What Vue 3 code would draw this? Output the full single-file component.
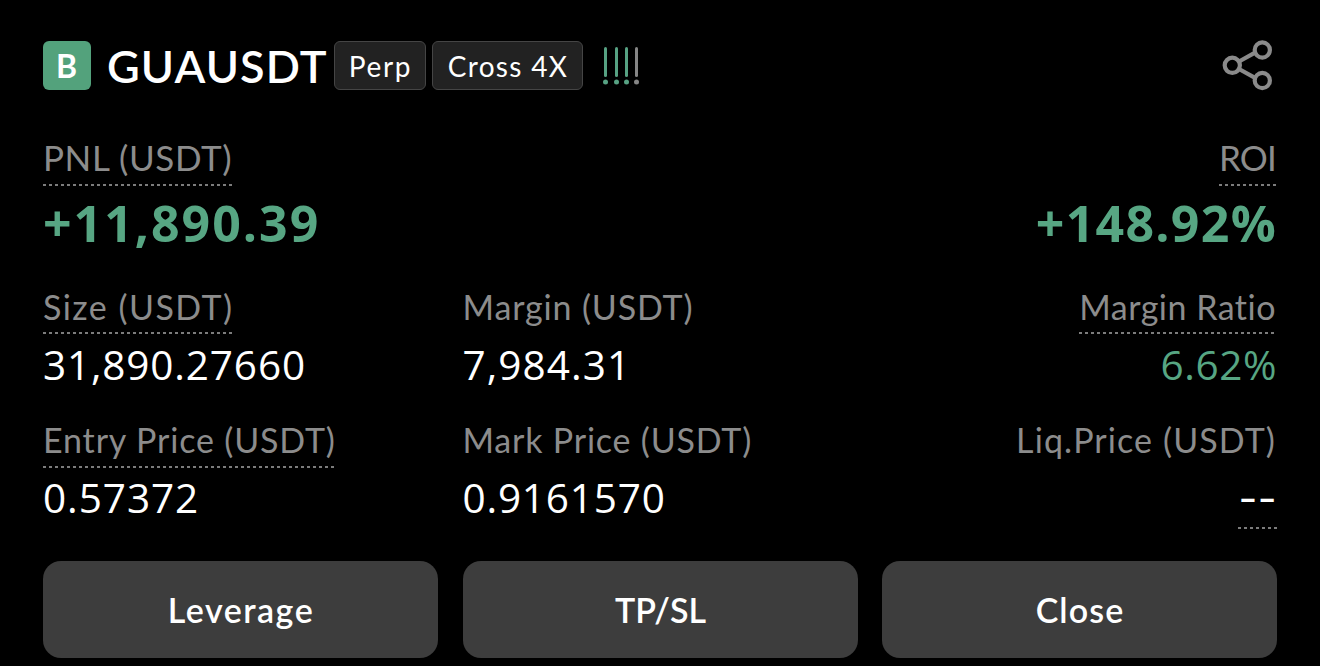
<template>
  <div class="position-card">
    <!-- header -->
    <div class="header">
      <span class="side-badge">B</span>
      <span class="symbol">GUAUSDT</span>
      <span class="tag perp">Perp</span>
      <span class="tag cross">Cross 4X</span>
      <svg class="adl" width="38" height="40" viewBox="0 0 38 40">
        <g v-for="bar in adlBars" :key="bar.x" :stroke="bar.color" :fill="bar.color">
          <line :x1="bar.x" y1="2.5" :x2="bar.x" y2="29.5" stroke-width="3" stroke-linecap="round" />
          <circle :cx="bar.x" cy="36" r="2.5" stroke="none" />
        </g>
      </svg>
      <svg class="share" width="54" height="54" viewBox="0 0 54 54" @click="onShare">
        <g fill="none" stroke="#8a8a8a" stroke-width="4.2">
          <path d="M19 22.5 L35.5 13.3 M19 30 L35.5 39.2" />
          <circle cx="12.3" cy="26.3" r="7.6" />
          <circle cx="42.3" cy="11" r="7.6" />
          <circle cx="42.3" cy="41.5" r="7.6" />
        </g>
      </svg>
    </div>

    <!-- stats -->
    <div v-for="(row, i) in rows" :key="i" class="stats" :class="'row-' + i">
      <div v-for="item in row" :key="item.key" class="stat" :class="item.key">
        <div class="label-line">
          <span class="label" :class="{ dotted: item.dotted }">{{ item.label }}</span>
        </div>
        <div class="value-line">
          <span class="value" :class="{ green: item.green, dotted: item.dottedValue }">{{ item.value }}</span>
        </div>
      </div>
    </div>

    <!-- actions -->
    <div class="actions">
      <button class="action leverage">Leverage</button>
      <button class="action tpsl">TP/SL</button>
      <button class="action close">Close</button>
    </div>
  </div>
</template>

<script setup>
import { ref } from 'vue'

const adlBars = [
  { x: 3.5, color: '#57a283' },
  { x: 14.5, color: '#57a283' },
  { x: 24.5, color: '#57a283' },
  { x: 34.5, color: '#858585' }
]

const rows = ref([
  [
    { key: 'pnl', label: 'PNL (USDT)', value: '+11,890.39', dotted: true, green: true },
    { key: 'roi', label: 'ROI', value: '+148.92%', dotted: true, green: true }
  ],
  [
    { key: 'size', label: 'Size (USDT)', value: '31,890.27660', dotted: true },
    { key: 'margin', label: 'Margin (USDT)', value: '7,984.31' },
    { key: 'ratio', label: 'Margin Ratio', value: '6.62%', dotted: true, green: true }
  ],
  [
    { key: 'entry', label: 'Entry Price (USDT)', value: '0.57372', dotted: true },
    { key: 'mark', label: 'Mark Price (USDT)', value: '0.9161570' },
    { key: 'liq', label: 'Liq.Price (USDT)', value: '--', dottedValue: true }
  ]
])

const onShare = () => {
  console.log('share')
}
</script>

<style>
body {
  background: #000;
}
</style>

<style scoped>
.position-card {
  box-sizing: border-box;
  height: 666px;
  padding: 41px 43px 0;
  overflow: hidden;
  background: #000;
  color: #fff;
  font-family: Lato, "Open Sans", sans-serif;
  font-variant-ligatures: none;
  font-kerning: normal;
}

.header {
  display: flex;
  align-items: center;
  height: 49px;
}

.side-badge {
  box-sizing: border-box;
  width: 48px;
  height: 49px;
  padding-right: 1px;
  border-radius: 6px;
  background: #53a27c;
  font-size: 32px;
  font-weight: 700;
  line-height: 49px;
  text-align: center;
}

.symbol {
  width: 227px;
  margin-left: 16px;
  font-size: 45px;
  font-weight: 600;
  line-height: 50px;
  letter-spacing: 1.1px;
}

.tag {
  box-sizing: border-box;
  height: 49px;
  border: 1.5px solid #454545;
  border-radius: 6px;
  background: #222;
  font-size: 28px;
  line-height: 48px;
  text-align: center;
  white-space: nowrap;
}

.perp {
  width: 92px;
  padding-left: 1px;
  letter-spacing: 1.7px;
}

.cross {
  width: 151px;
  margin-left: 6px;
  padding-left: 1px;
  letter-spacing: 1.3px;
}

.adl {
  margin-left: 19px;
}

.share {
  margin-left: auto;
  margin-right: 3px;
  cursor: pointer;
}

.stats {
  display: grid;
  grid-template-columns: repeat(3, 395px);
  justify-content: space-between;
}

.row-0 {
  grid-template-columns: auto auto;
  margin-top: 46px;
}

.row-1 {
  margin-top: 26px;
}

.row-2 {
  margin-top: 24px;
}

.stat:last-child {
  text-align: right;
}

.label-line {
  display: flex;
  height: 49px;
}

.row-0 .label-line,
.row-2 .label-line {
  height: 50px;
}

.stat:last-child .label-line,
.stat:last-child .value-line {
  justify-content: flex-end;
}

.label {
  color: #8c8c8c;
  font-size: 34px;
  line-height: 43px;
  white-space: nowrap;
}

.dotted {
  background: repeating-linear-gradient(to right, #7c7c7c 0 3px, transparent 3px 6px) left bottom / 100% 2px no-repeat;
}

.value-line {
  display: flex;
  height: 60px;
}

.value {
  font-family: "Open Sans", "Noto Sans", sans-serif;
  font-size: 40.5px;
  line-height: 62px;
}

.row-0 .label {
  font-size: 35px;
}

.row-0 .value-line {
  height: 73px;
}

.row-0 .value {
  font-size: 50px;
  font-weight: 700;
  line-height: 75px;
}

.row-2 .value-line {
  height: 61px;
}

.row-2 .value {
  line-height: 60px;
}

.green {
  color: #57a683;
}

/* tracking per cell */
.pnl .label { letter-spacing: 0.6px; }
.pnl .value { letter-spacing: 2px; }
.roi .label { letter-spacing: -0.8px; }
.roi .value { letter-spacing: 1.3px; }
.size .label { letter-spacing: 1.45px; }
.size .value { letter-spacing: 0.85px; }
.margin .label { letter-spacing: 0.85px; }
.margin .value { letter-spacing: 1.1px; }
.ratio .label { letter-spacing: 0.5px; }
.ratio .value { letter-spacing: 0.6px; }
.entry .label { letter-spacing: 0.85px; }
.entry .value { letter-spacing: 0.95px; }
.mark .label { letter-spacing: 0.8px; }
.mark .value { letter-spacing: 0.8px; }
.liq .label { margin-right: 1px; letter-spacing: 1.1px; }
.liq .value { font-family: Inter, sans-serif; font-size: 41px; letter-spacing: 0.4px; }

.roi .label-line,
.ratio .label-line {
  padding-right: 1px;
}

.actions {
  display: flex;
  justify-content: space-between;
  margin-top: 32px;
}

.action {
  width: 395px;
  height: 97px;
  padding: 0 0 0 1px;
  border: none;
  border-radius: 18px;
  background: #3d3d3d;
  color: #fff;
  font-family: inherit;
  font-size: 34px;
  font-weight: 600;
  line-height: 97px;
}

.leverage { letter-spacing: 1.5px; }
.tpsl { letter-spacing: 0; }
.close { letter-spacing: 1.1px; }
</style>
